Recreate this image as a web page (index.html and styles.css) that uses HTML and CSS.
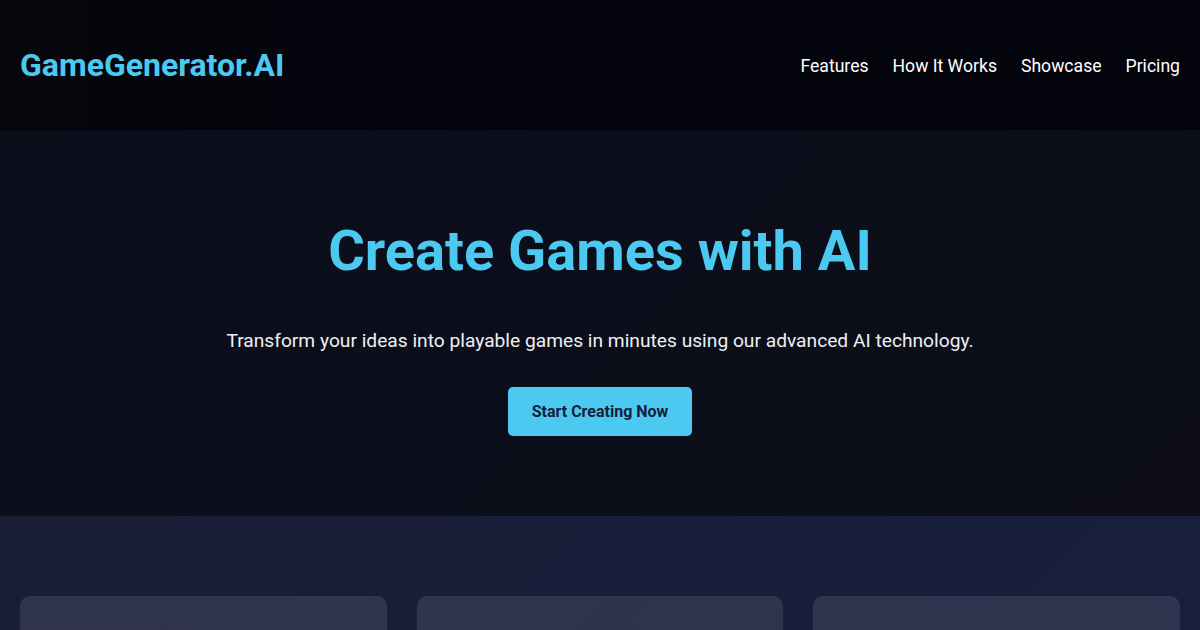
FILE: index.html
```html
<!DOCTYPE html>
<html lang="en">
<head>
    <meta charset="UTF-8">
    <meta name="viewport" content="width=device-width, initial-scale=1.0">
    <title>GameGenerator.AI</title>
    <link rel="stylesheet" href="styles.css">
</head>
<body>

<header>
    <div class="logo">GameGenerator.AI</div>
    <nav>
        <a href="#features">Features</a>
        <a href="#how">How It Works</a>
        <a href="#showcase">Showcase</a>
        <a href="#pricing">Pricing</a>
    </nav>
</header>

<!-- Hero -->
<section class="hero">
    <h1>Create Games with AI</h1>
    <p>Transform your ideas into playable games in minutes using our advanced AI technology.</p>
    <a href="#" class="button">Start Creating Now</a>
</section>

<!-- Features -->
<section class="features" id="features">
    <div class="card"></div>
    <div class="card"></div>
    <div class="card"></div>
</section>

</body>
</html>
```

FILE: styles.css
```css
body {
    font-family: Roboto, "Liberation Sans", sans-serif;
    margin: 0;
    padding: 0;
    background-color: #0a0a14;
    color: #ffffff;
}
header {
    display: flex;
    justify-content: space-between;
    align-items: center;
    height: 130px;
    padding: 0 20px;
    background: linear-gradient(90deg, #05060c, #04050c);
}
.logo {
    font-size: 32px;
    font-weight: 700;
    color: #4cc9f0;
}
nav {
    display: flex;
    gap: 24px;
    padding-top: 2px;
}
nav a {
    color: #ffffff;
    text-decoration: none;
    font-size: 17.6px;
}
.hero {
    height: 386px;
    box-sizing: border-box;
    padding-top: 88px;
    text-align: center;
    background: linear-gradient(135deg, #0b0f1c, #0c0d18);
}
.hero h1 {
    margin: 0;
    font-size: 56px;
    line-height: 67px;
    font-weight: 700;
    color: #4cc9f0;
}
.hero p {
    margin: 41px 0 0;
    font-size: 19.2px;
    line-height: 29px;
    color: #eef0f4;
}
.button {
    display: inline-block;
    margin-top: 32px;
    padding: 15px 24px;
    background-color: #4cc9f0;
    color: #14203a;
    font-size: 16px;
    line-height: 19px;
    font-weight: 700;
    text-decoration: none;
    border-radius: 5px;
}
.features {
    display: grid;
    grid-template-columns: repeat(3, 1fr);
    gap: 30px;
    padding: 80px 20px;
    background: linear-gradient(135deg, #1a1d36, #16203e);
}
.card {
    height: 300px;
    background-color: rgba(255, 255, 255, 0.1);
    border-radius: 10px;
}
```
